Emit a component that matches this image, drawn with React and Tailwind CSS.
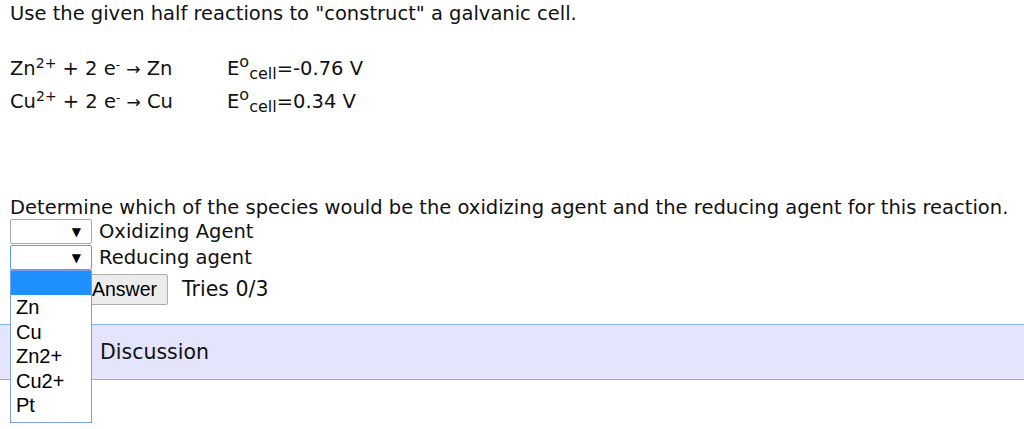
import React from 'react';

const FakeSelect = ({ focused }) => (
  <div
    className={`w-[82px] h-[25px] bg-white flex items-center justify-end pr-[10px] rounded-[2px] border ${
      focused ? 'border-[#5b9cf0]' : 'border-[#a9a9a9]'
    }`}
  >
    <span className="text-[12px] leading-none text-black">▼</span>
  </div>
);

const options = ['Zn', 'Cu', 'Zn2+', 'Cu2+', 'Pt'];

export default function App() {
  return (
    <div className="relative w-[1024px] h-[429px] bg-white text-[#111] overflow-hidden font-['DejaVu_Sans',Verdana,sans-serif] text-[19.5px]">
      <div className="pl-[10px] pt-[3px] h-[25px] leading-[22px] whitespace-nowrap">
        Use the given half reactions to "construct" a galvanic cell.
      </div>

      {/* half reactions */}
      <div className="pl-[10px] mt-[33px] flex flex-col gap-[11px]">
        {[
          ['Zn', '-0.76 V'],
          ['Cu', '0.34 V'],
        ].map(([el, e]) => (
          <div key={el} className="flex h-[22px] leading-[22px] whitespace-nowrap">
            <span className="w-[217px]">
              {el}
              <sup className="text-[14px]">2+</sup> + 2 e<sup className="text-[12px]">-</sup>{' '}
              <span className="text-[17px]">→</span> {el}
            </span>
            <span>
              E<sup className="text-[16px]">o</sup>
              <sub className="text-[16px]">cell</sub>={e}
            </span>
          </div>
        ))}
      </div>

      <div className="pl-[10px] mt-[83px] h-[24px] leading-[24px] whitespace-nowrap">
        Determine which of the species would be the oxidizing agent and the reducing agent for this reaction.
      </div>

      <div className="pl-[10px] flex flex-col gap-[1px] mt-[-1px] leading-[25px]">
        <div className="flex h-[25px] items-center gap-[7px]">
          <FakeSelect />
          <span>Oxidizing Agent</span>
        </div>
        <div className="flex h-[25px] items-center gap-[7px]">
          <FakeSelect focused />
          <span>Reducing agent</span>
        </div>
      </div>

      <div className="pl-[10px] mt-[4px] h-[31px] flex items-center">
        <button className="ml-[71px] h-[31px] px-[10px] bg-[#ececec] border border-[#adadad] rounded-[2px] text-[19.5px] text-black font-['Liberation_Sans',Arial,sans-serif] leading-none">
          Answer
        </button>
        <span className="ml-[14px] text-[20.5px] leading-[31px]">Tries 0/3</span>
      </div>

      <div className="mt-[19px] h-[56px] bg-[#e4e4fc] border-y border-[#82b6f4] flex items-center pl-[100px]">
        <span className="text-[20.5px]">Discussion</span>
      </div>

      {/* open dropdown list */}
      <div className="absolute left-[10px] top-[270px] w-[82px] h-[153px] bg-white border border-[#7a9ee8] font-['Liberation_Sans',Arial,sans-serif] text-[20px] text-black">
        <div className="h-[24px] bg-[#1e90ff]" />
        {options.map((o) => (
          <div key={o} className="h-[24.6px] leading-[24.6px] pl-[5px]">
            {o}
          </div>
        ))}
      </div>
    </div>
  );
}
